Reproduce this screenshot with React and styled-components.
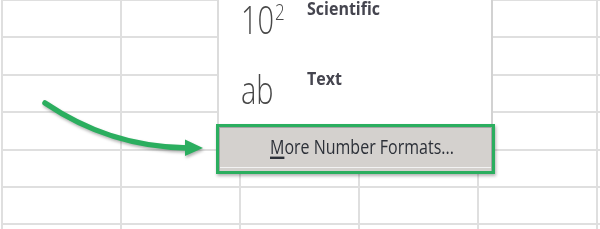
import React from 'react'
import styled, { createGlobalStyle } from 'styled-components'

const GlobalStyle = createGlobalStyle`
    html, body {
        margin: 0;
        padding: 0;
        background: #ffffff;
        overflow: hidden;
    }
`

const GREEN = '#2bae5f'

const Sheet = styled.div`
    position: relative;
    width: 600px;
    height: 229px;
    overflow: hidden;
    background: #fff;
`
const CellGrid = styled.div`
    display: grid;
    grid-template-columns: repeat(6, 119px);
    grid-template-rows: repeat(7, 37.4px);
    margin: -1px 0 0 1px;
`
const Cell = styled.div`
    box-sizing: border-box;
    border-left: 2px solid #dfdfdf;
    border-top: 2px solid #dfdfdf;
`

const Menu = styled.div`
    position: absolute;
    left: 217px;
    top: 0;
    width: 276px;
    box-sizing: border-box;
    background: #fff;
    border-left: 2px solid #dcdcdc;
    border-right: 2px solid #d2d2d2;
    display: flex;
    flex-direction: column;
`
const Item = styled.div`
    display: flex;
    align-items: flex-start;
    height: ${p => p.$h}px;
    padding-left: 22px;
`
const IconBox = styled.div`
    width: 66px;
    flex: none;
    font-family: "Open Sans", "Liberation Sans", sans-serif;
    font-weight: 300;
    font-size: 29px;
    line-height: 29px;
    color: #484848;
    transform: scaleY(1.3);
    transform-origin: top left;
    white-space: nowrap;
`
const Sup = styled.span`
    display: inline-block;
    font-size: 17px;
    line-height: 17px;
    vertical-align: top;
    margin-left: 1px;
`
const Label = styled.div`
    font-family: "Open Sans", "Liberation Sans", sans-serif;
    font-weight: 700;
    font-size: 16px;
    line-height: 15px;
    color: #45454f;
    transform: scaleY(1.15);
    transform-origin: top left;
    white-space: nowrap;
`

const MoreButton = styled.div`
    box-sizing: border-box;
    width: 279px;
    height: 50px;
    margin-left: -3px;
    border: 3px solid ${GREEN};
    box-shadow: 1px 2px 3px rgba(0, 0, 0, 0.3);
    background: #fff;
    display: flex;
`
const Face = styled.div`
    flex: 1;
    border: 1px solid #a4a4a4;
    border-bottom: none;
    background: #d4d1ce;
    box-shadow: inset 0 -3px 0 #d4d1ce, inset 0 -4px 0 #f2f2f2;
    display: flex;
    align-items: center;
    padding: 0 0 6px 50px;
    font-family: "Open Sans", "Liberation Sans", sans-serif;
    font-size: 16px;
    line-height: 20px;
    color: #2c3038;
`
const FaceText = styled.span`
    display: inline-block;
    transform: scaleY(1.2);
    white-space: nowrap;
`
const AccessKey = styled.span`
    text-decoration: underline;
    text-decoration-thickness: 1.5px;
    text-underline-offset: 2px;
`

const ArrowSvg = styled.svg`
    position: absolute;
    left: 40px;
    top: 95px;
    overflow: visible;
    filter: drop-shadow(1px 2px 1.5px rgba(0, 0, 0, 0.3));
`

function Arrow() {
    return (
        <ArrowSvg width="170" height="65" viewBox="0 0 170 65">
            <path d="M5 8 C45 35 90 52 148 53" fill="none" stroke={GREEN} strokeWidth="5.5" strokeLinecap="round" />
            <polygon points="145,44.5 163,53 145,61" fill={GREEN} />
        </ArrowSvg>
    )
}

export default function App() {
    const cells = Array.from({ length: 42 })

    return (
        <Sheet>
            <GlobalStyle />
            <CellGrid>
                {cells.map((_, i) => <Cell key={i} />)}
            </CellGrid>
            <Menu>
                <Item $h={70}>
                    <IconBox>10<Sup>2</Sup></IconBox>
                    <Label>Scientific</Label>
                </Item>
                <Item $h={54}>
                    <IconBox>ab</IconBox>
                    <Label>Text</Label>
                </Item>
                <MoreButton>
                    <Face>
                        <FaceText><AccessKey>M</AccessKey>ore Number Formats...</FaceText>
                    </Face>
                </MoreButton>
            </Menu>
            <Arrow />
        </Sheet>
    )
}
